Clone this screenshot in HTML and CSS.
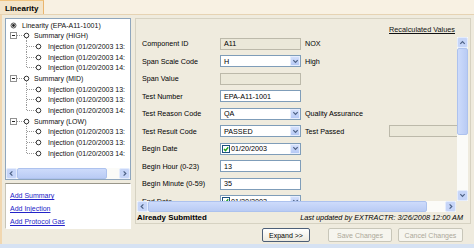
FILE: index.html
```html
<!DOCTYPE html>
<html lang="en">
<head>
    <meta charset="UTF-8">
    <title>Linearity</title>
    <link rel="stylesheet" href="styles.css">
</head>
<body>

<svg class="defs" width="0" height="0">
    <symbol id="chev-down" viewBox="0 0 8 8"><path d="M1.5 2.5L4 5L6.5 2.5" fill="none" stroke="#4d6185" stroke-width="1.4"/></symbol>
    <symbol id="chev-up" viewBox="0 0 8 8"><path d="M1.5 5.5L4 3L6.5 5.5" fill="none" stroke="#4d6185" stroke-width="1.4"/></symbol>
    <symbol id="chev-left" viewBox="0 0 8 8"><path d="M5 1.5L2.5 4L5 6.5" fill="none" stroke="#4d6185" stroke-width="1.4"/></symbol>
    <symbol id="chev-right" viewBox="0 0 8 8"><path d="M3 1.5L5.5 4L3 6.5" fill="none" stroke="#4d6185" stroke-width="1.4"/></symbol>
</svg>

<div class="window">

    <!-- tab -->
    <div class="tabstrip">
        <div class="tab">Linearity</div>
    </div>

    <div class="tabpage">
        <div class="main">

            <!-- left: tree + links -->
            <div class="leftcol">
                <div class="tree">
                    <div class="tree-rows">
                        <div class="node">
                            <svg class="g" width="16" height="11"><circle cx="7.5" cy="5.5" r="2.5" fill="#fff" stroke="#555"/><circle cx="7.5" cy="5.5" r="1.4" fill="#222"/></svg>
                            <span>Linearity (EPA-A11-1001)</span>
                        </div>
                        <div class="node">
                            <svg class="g" width="28" height="11"><rect x="4.5" y="2.5" width="6" height="6" fill="#fff" stroke="#919191"/><path d="M6 5.5H9" stroke="#222"/><path class="dot" d="M11 5.5H18M20.5 8V11"/><circle cx="20.5" cy="5.5" r="2.3" fill="#fff" stroke="#333"/></svg>
                            <span>Summary (HIGH)</span>
                        </div>
                        <div class="node">
                            <svg class="g" width="42" height="11"><path class="dot" d="M20.5 0V11M21 5.5H30"/><circle cx="32.5" cy="5.5" r="2.3" fill="#fff" stroke="#333"/></svg>
                            <span>Injection (01/20/2003 13:</span>
                        </div>
                        <div class="node">
                            <svg class="g" width="42" height="11"><path class="dot" d="M20.5 0V11M21 5.5H30"/><circle cx="32.5" cy="5.5" r="2.3" fill="#fff" stroke="#333"/></svg>
                            <span>Injection (01/20/2003 14:</span>
                        </div>
                        <div class="node">
                            <svg class="g" width="42" height="11"><path class="dot" d="M20.5 0V5.5M21 5.5H30"/><circle cx="32.5" cy="5.5" r="2.3" fill="#fff" stroke="#333"/></svg>
                            <span>Injection (01/20/2003 14:</span>
                        </div>
                        <div class="node">
                            <svg class="g" width="28" height="11"><rect x="4.5" y="2.5" width="6" height="6" fill="#fff" stroke="#919191"/><path d="M6 5.5H9" stroke="#222"/><path class="dot" d="M11 5.5H18M20.5 8V11"/><circle cx="20.5" cy="5.5" r="2.3" fill="#fff" stroke="#333"/></svg>
                            <span>Summary (MID)</span>
                        </div>
                        <div class="node">
                            <svg class="g" width="42" height="11"><path class="dot" d="M20.5 0V11M21 5.5H30"/><circle cx="32.5" cy="5.5" r="2.3" fill="#fff" stroke="#333"/></svg>
                            <span>Injection (01/20/2003 13:</span>
                        </div>
                        <div class="node">
                            <svg class="g" width="42" height="11"><path class="dot" d="M20.5 0V11M21 5.5H30"/><circle cx="32.5" cy="5.5" r="2.3" fill="#fff" stroke="#333"/></svg>
                            <span>Injection (01/20/2003 13:</span>
                        </div>
                        <div class="node">
                            <svg class="g" width="42" height="11"><path class="dot" d="M20.5 0V5.5M21 5.5H30"/><circle cx="32.5" cy="5.5" r="2.3" fill="#fff" stroke="#333"/></svg>
                            <span>Injection (01/20/2003 14:</span>
                        </div>
                        <div class="node">
                            <svg class="g" width="28" height="11"><rect x="4.5" y="2.5" width="6" height="6" fill="#fff" stroke="#919191"/><path d="M6 5.5H9" stroke="#222"/><path class="dot" d="M11 5.5H18M20.5 8V11"/><circle cx="20.5" cy="5.5" r="2.3" fill="#fff" stroke="#333"/></svg>
                            <span>Summary (LOW)</span>
                        </div>
                        <div class="node">
                            <svg class="g" width="42" height="11"><path class="dot" d="M20.5 0V11M21 5.5H30"/><circle cx="32.5" cy="5.5" r="2.3" fill="#fff" stroke="#333"/></svg>
                            <span>Injection (01/20/2003 13:</span>
                        </div>
                        <div class="node">
                            <svg class="g" width="42" height="11"><path class="dot" d="M20.5 0V11M21 5.5H30"/><circle cx="32.5" cy="5.5" r="2.3" fill="#fff" stroke="#333"/></svg>
                            <span>Injection (01/20/2003 13:</span>
                        </div>
                        <div class="node">
                            <svg class="g" width="42" height="11"><path class="dot" d="M20.5 0V5.5M21 5.5H30"/><circle cx="32.5" cy="5.5" r="2.3" fill="#fff" stroke="#333"/></svg>
                            <span>Injection (01/20/2003 14:</span>
                        </div>
                    </div>
                    <div class="hscroll">
                        <div class="sb-btn"><svg><use href="#chev-left"/></svg></div>
                        <div class="sb-thumb h" style="width: 90px"></div>
                        <div class="sb-track"></div>
                        <div class="sb-btn"><svg><use href="#chev-right"/></svg></div>
                    </div>
                </div>

                <div class="links">
                    <a href="#">Add Summary</a>
                    <a href="#">Add Injection</a>
                    <a href="#">Add Protocol Gas</a>
                </div>
            </div>

            <!-- right: detail -->
            <div class="detail">
                <div class="detail-head"><a href="#" class="recalc">Recalculated Values</a></div>

                <div class="scrollbox">
                    <div class="scroll-mid">
                        <div class="viewport">
                            <div class="form">
                                <div class="frow">
                                    <span class="lbl">Component ID</span>
                                    <span class="fld ro">A11</span>
                                    <span class="extra">NOX</span>
                                </div>
                                <div class="frow">
                                    <span class="lbl">Span Scale Code</span>
                                    <span class="fld">H<span class="dd"><svg><use href="#chev-down"/></svg></span></span>
                                    <span class="extra">High</span>
                                </div>
                                <div class="frow">
                                    <span class="lbl">Span Value</span>
                                    <span class="fld ro"></span>
                                </div>
                                <div class="frow">
                                    <span class="lbl">Test Number</span>
                                    <span class="fld">EPA-A11-1001</span>
                                </div>
                                <div class="frow">
                                    <span class="lbl">Test Reason Code</span>
                                    <span class="fld">QA<span class="dd"><svg><use href="#chev-down"/></svg></span></span>
                                    <span class="extra">Quality Assurance</span>
                                </div>
                                <div class="frow">
                                    <span class="lbl">Test Result Code</span>
                                    <span class="fld">PASSED<span class="dd"><svg><use href="#chev-down"/></svg></span></span>
                                    <span class="extra">Test Passed</span>
                                    <span class="fld ro wide"></span>
                                </div>
                                <div class="frow">
                                    <span class="lbl">Begin Date</span>
                                    <span class="fld date"><svg class="cb" width="8" height="8" viewBox="0 0 8 8"><rect x="0.5" y="0.5" width="7" height="7" fill="#fff" stroke="#1c5180"/><path d="M2 4L3.5 5.6L6.2 2.2" fill="none" stroke="#21a121" stroke-width="1.4"/></svg>01/20/2003<span class="dd"><svg><use href="#chev-down"/></svg></span></span>
                                </div>
                                <div class="frow">
                                    <span class="lbl">Begin Hour (0-23)</span>
                                    <span class="fld">13</span>
                                </div>
                                <div class="frow">
                                    <span class="lbl">Begin Minute (0-59)</span>
                                    <span class="fld">35</span>
                                </div>
                                <div class="frow">
                                    <span class="lbl">End Date</span>
                                    <span class="fld date"><svg class="cb" width="8" height="8" viewBox="0 0 8 8"><rect x="0.5" y="0.5" width="7" height="7" fill="#fff" stroke="#1c5180"/><path d="M2 4L3.5 5.6L6.2 2.2" fill="none" stroke="#21a121" stroke-width="1.4"/></svg>01/20/2003<span class="dd"><svg><use href="#chev-down"/></svg></span></span>
                                </div>
                            </div>
                        </div>
                        <div class="vscroll">
                            <div class="sb-btn"><svg><use href="#chev-up"/></svg></div>
                            <div class="sb-thumb v" style="height: 87px"></div>
                            <div class="sb-track"></div>
                            <div class="sb-btn"><svg><use href="#chev-down"/></svg></div>
                        </div>
                    </div>
                    <div class="hscroll">
                        <div class="sb-btn"><svg><use href="#chev-left"/></svg></div>
                        <div class="sb-thumb h" style="width: 279px"></div>
                        <div class="sb-track"></div>
                        <div class="sb-btn"><svg><use href="#chev-right"/></svg></div>
                        <div class="corner"></div>
                    </div>
                </div>

                <div class="status">
                    <b>Already Submitted</b>
                    <i>Last updated by EXTRACTR: 3/26/2008 12:00 AM</i>
                </div>
            </div>
        </div>

        <div class="buttons">
            <button class="btn">Expand &gt;&gt;</button>
            <button class="btn save" disabled>Save Changes</button>
            <button class="btn" disabled>Cancel Changes</button>
        </div>
    </div>

    <div class="bottombar"></div>
</div>

</body>
</html>
```

FILE: styles.css
```css
body { margin: 0; background: #efebde; font-family: "Liberation Sans", Arial, sans-serif; font-size: 7px; color: #000; }
.defs { position: absolute; }
.window { width: 474px; height: 248px; display: flex; flex-direction: column; overflow: hidden; }

/* tab strip */
.tabstrip { height: 15px; flex: none; display: flex; background: #f8f1e3; box-sizing: border-box; border-bottom: 1px solid #e6d3b3; }
.tab { padding: 0 5px; line-height: 15px; font-size: 8px; font-weight: bold; background: #f3e5cb; border-right: 1px solid #eab56e; border-top: 1px solid #f0c47f; box-sizing: border-box; }

.tabpage { flex: 1; display: flex; flex-direction: column; border-left: 2px solid #f1d7b0; padding: 2px 3px 2px 3px; min-height: 0; }
.main { height: 210px; flex: none; display: flex; gap: 4px; margin-top: 1px; }

/* left column */
.leftcol { width: 126px; flex: none; display: flex; flex-direction: column; gap: 3px; }
.tree { height: 162px; flex: none; box-sizing: border-box; border: 1px solid #8fa6bd; background: #fff; display: flex; flex-direction: column; overflow: hidden; }
.tree-rows { flex: 1; padding-top: 1px; overflow: hidden; }
.node { height: 10.67px; display: flex; align-items: center; white-space: nowrap; color: #111; }
.g { flex: none; display: block; overflow: visible; }
.dot { fill: none; stroke: #9a9a9a; stroke-dasharray: 1 1; }

.links { flex: 1; box-sizing: border-box; background: #fff; border: 1px solid #fff; border-top-color: #9a978a; border-left-color: #c8c5b8; padding: 5px 0 0 4px; display: flex; flex-direction: column; }
.links a { line-height: 13px; color: #2323c8; font-size: 7px; }

/* scrollbars */
.hscroll { height: 11px; flex: none; display: flex; background: #fbfbf8; }
.vscroll { width: 11px; flex: none; display: flex; flex-direction: column; background: #fbfbf8; }
.sb-btn { width: 11px; height: 11px; flex: none; box-sizing: border-box; background: #c6d5f8; border: 1px solid #e4ecfd; border-radius: 2px; display: flex; align-items: center; justify-content: center; }
.sb-btn svg { width: 7px; height: 7px; }
.sb-thumb { flex: none; box-sizing: border-box; background: #c3d3f7; border: 1px solid #adc2ee; border-radius: 2px; }
.sb-thumb.h { background: linear-gradient(#cddbfb, #b9cbf4); }
.sb-thumb.v { background: linear-gradient(90deg, #cddbfb, #b9cbf4); }
.sb-track { flex: 1; }
.corner { width: 12px; flex: none; background: #efebde; }

/* right detail panel */
.detail { width: 336px; height: 206px; flex: none; box-sizing: border-box; border: 1px solid #d6d2c2; padding: 0 2px 0 1px; display: flex; flex-direction: column; }
.detail-head { height: 18px; flex: none; display: flex; justify-content: flex-end; align-items: flex-end; padding-right: 13px; box-sizing: border-box; padding-bottom: 2px; }
.recalc { color: #111; font-size: 7.3px; line-height: 10px; }
.scrollbox { height: 175px; flex: none; display: flex; flex-direction: column; }
.scroll-mid { flex: 1; display: flex; min-height: 0; }
.viewport { flex: 1; overflow: hidden; }
.form { margin-top: -2px; }
.frow { height: 17.5px; display: flex; align-items: center; padding-left: 5px; white-space: nowrap; font-size: 7.2px; }
.lbl { width: 78px; flex: none; }
.fld { width: 81px; height: 12px; flex: none; box-sizing: border-box; border: 1px solid #7f9db9; background: #fff; display: flex; align-items: center; padding-left: 3px; }
.fld.ro { background: #ebe8d9; border-color: #bcb9aa; }
.fld.wide { width: 90px; }
.fld.date { padding-left: 1px; }
.extra { margin-left: 4px; width: 84px; flex: none; }
.dd { margin-left: auto; width: 10px; height: 10px; box-sizing: border-box; background: linear-gradient(#d3dffb, #b6c9f5); border: 1px solid #e6edfd; display: flex; align-items: center; justify-content: center; }
.dd svg { width: 7px; height: 7px; }
.cb { flex: none; display: block; margin-right: 1px; }

.status { height: 11px; flex: none; display: flex; justify-content: space-between; align-items: center; padding-right: 5px; white-space: nowrap; }
.status b { font-size: 7.9px; }
.status i { font-size: 7.3px; }

/* buttons */
.buttons { height: 14px; flex: none; display: flex; justify-content: flex-end; gap: 6px; padding-right: 8px; }
.btn { height: 14px; padding: 0; font-family: "Liberation Sans", Arial, sans-serif; font-size: 7px; border-radius: 2px; box-sizing: border-box; width: 64px; background: #f6f5ee; border: 1px solid #c8c6b9; color: #aca899; }
.btn:first-child { width: 48px; margin-right: 12px; color: #000; border-color: #4d5f78; background: linear-gradient(#ffffff, #ece9de); }
.btn:last-child { width: 65px; }

.bottombar { height: 4px; flex: none; background: #d6e2f3; }
```
